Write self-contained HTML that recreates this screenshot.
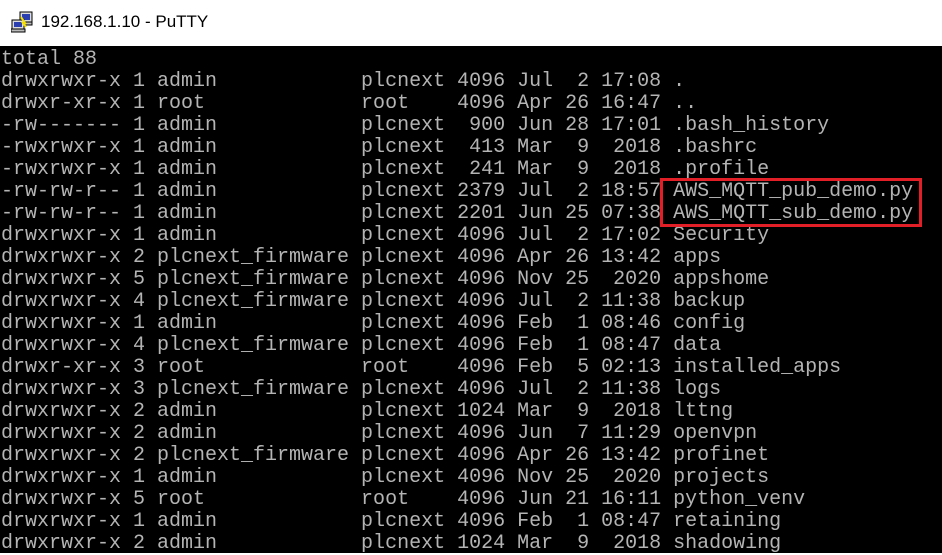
<!DOCTYPE html>
<html><head><meta charset="utf-8"><style>
body{margin:0;width:942px;height:553px;overflow:hidden;background:#fff;position:relative;font-family:"Liberation Sans",sans-serif}
.title{position:absolute;left:0;top:0;width:942px;height:46px;background:#fff}
.title span{position:absolute;left:41px;top:12px;font-size:17px;color:#000}
.term{position:absolute;left:0;top:46px;width:942px;height:507px;background:#000}
pre{margin:0;position:absolute;left:1px;top:3px;font-family:"Liberation Mono",monospace;font-size:20px;line-height:22px;color:#b4b4b4}
.box{position:absolute;left:660px;top:132px;width:256px;height:43px;border:3px solid #e21f26}
</style></head><body>
<div class="title">
<svg style="position:absolute;left:11px;top:11px" width="24" height="22" viewBox="0 0 24 22">
<rect x="9" y="1" width="12" height="10" fill="#ddd" stroke="#000"/><rect x="11" y="3" width="8" height="6" fill="#2b3fb0"/>
<rect x="7" y="11" width="14" height="3" fill="#bbb" stroke="#000"/>
<rect x="1" y="9" width="12" height="9" fill="#ddd" stroke="#000"/><rect x="3" y="11" width="8" height="5" fill="#2b3fb0"/>
<rect x="0" y="18" width="14" height="3" fill="#bbb" stroke="#000"/>
<path d="M10 6 L14 12 L12 12 L15 16" stroke="#f5e000" stroke-width="2" fill="none"/>
</svg>
<span>192.168.1.10 - PuTTY</span></div>
<div class="term"><pre>total 88
drwxrwxr-x 1 admin            plcnext 4096 Jul  2 17:08 .
drwxr-xr-x 1 root             root    4096 Apr 26 16:47 ..
-rw------- 1 admin            plcnext  900 Jun 28 17:01 .bash_history
-rwxrwxr-x 1 admin            plcnext  413 Mar  9  2018 .bashrc
-rwxrwxr-x 1 admin            plcnext  241 Mar  9  2018 .profile
-rw-rw-r-- 1 admin            plcnext 2379 Jul  2 18:57 AWS_MQTT_pub_demo.py
-rw-rw-r-- 1 admin            plcnext 2201 Jun 25 07:38 AWS_MQTT_sub_demo.py
drwxrwxr-x 1 admin            plcnext 4096 Jul  2 17:02 Security
drwxrwxr-x 2 plcnext_firmware plcnext 4096 Apr 26 13:42 apps
drwxrwxr-x 5 plcnext_firmware plcnext 4096 Nov 25  2020 appshome
drwxrwxr-x 4 plcnext_firmware plcnext 4096 Jul  2 11:38 backup
drwxrwxr-x 1 admin            plcnext 4096 Feb  1 08:46 config
drwxrwxr-x 4 plcnext_firmware plcnext 4096 Feb  1 08:47 data
drwxr-xr-x 3 root             root    4096 Feb  5 02:13 installed_apps
drwxrwxr-x 3 plcnext_firmware plcnext 4096 Jul  2 11:38 logs
drwxrwxr-x 2 admin            plcnext 1024 Mar  9  2018 lttng
drwxrwxr-x 2 admin            plcnext 4096 Jun  7 11:29 openvpn
drwxrwxr-x 2 plcnext_firmware plcnext 4096 Apr 26 13:42 profinet
drwxrwxr-x 1 admin            plcnext 4096 Nov 25  2020 projects
drwxrwxr-x 5 root             root    4096 Jun 21 16:11 python_venv
drwxrwxr-x 1 admin            plcnext 4096 Feb  1 08:47 retaining
drwxrwxr-x 2 admin            plcnext 1024 Mar  9  2018 shadowing</pre>
<div class="box"></div></div>
</body></html>
